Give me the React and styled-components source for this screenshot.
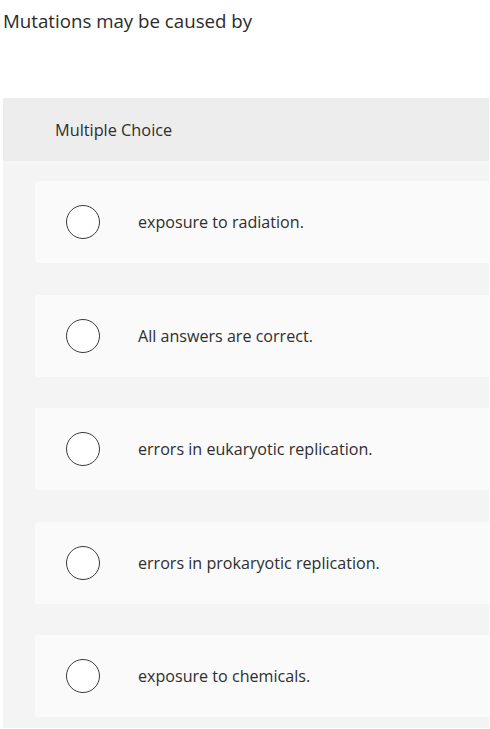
import React from "react";
import styled, { createGlobalStyle } from "styled-components";

const GlobalStyle = createGlobalStyle`
  body {
    margin: 0;
    background: #ffffff;
    font-family: "Open Sans", "Lato", sans-serif;
    color: #333333;
  }
`;

const Page = styled.div`
  width: 490px;
  padding: 0 1px 0 3px;
  box-sizing: border-box;
`;

const Question = styled.p`
  margin: 0;
  padding-top: 9px;
  font-size: 18.7px;
  line-height: 24px;
  color: #2b2b2b;
  height: 89px;
`;

const Panel = styled.div`
  background: #f4f4f4;
  padding-bottom: 11px;
`;

const PanelHeader = styled.div`
  background: #ededed;
  height: 63px;
  display: flex;
  align-items: center;
  padding-left: 52px;
  font-size: 16.3px;
  color: #2e2e2e;
`;

const Choices = styled.div`
  display: flex;
  flex-direction: column;
  gap: 31.5px;
  padding: 20px 0 0 32px;
`;

const Choice = styled.label`
  display: flex;
  align-items: center;
  height: 82px;
  background: #fafafa;
  border-radius: 3px 0 0 3px;
  padding-left: 31px;
  font-size: 16.1px;
  color: #2e2e2e;
  cursor: pointer;
`;

const Radio = styled.span`
  width: 32px;
  height: 32px;
  border: 1.5px solid #3a3a3a;
  border-radius: 50%;
  background: #ffffff;
  flex-shrink: 0;
  margin-right: 38px;
`;

const options = [
  "exposure to radiation.",
  "All answers are correct.",
  "errors in eukaryotic replication.",
  "errors in prokaryotic replication.",
  "exposure to chemicals.",
];

export default function App() {
  return (
    <Page>
      <GlobalStyle />
      <Question>Mutations may be caused by</Question>
      <Panel>
        <PanelHeader>Multiple Choice</PanelHeader>
        <Choices>
          {options.map((o) => (
            <Choice key={o}>
              <Radio />
              {o}
            </Choice>
          ))}
        </Choices>
      </Panel>
    </Page>
  );
}
